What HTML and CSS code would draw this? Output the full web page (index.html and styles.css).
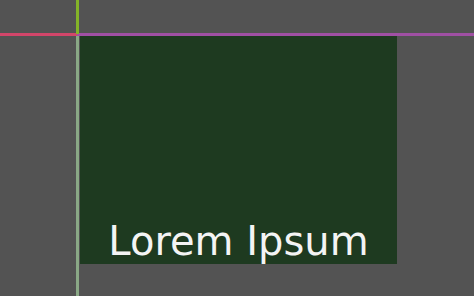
FILE: index.html
```html
<!DOCTYPE html>
<html>
<head>
<meta charset="utf-8">
<link rel="stylesheet" href="styles.css">
</head>
<body>
<div class="canvas">
  <div class="panel">
    <span class="label">Lorem Ipsum</span>
  </div>
  <div class="guide-h-left"></div>
  <div class="guide-h-right"></div>
  <div class="guide-v-top"></div>
  <div class="guide-v-bottom"></div>
</div>
</body>
</html>
```
FILE: styles.css
```css
html, body {
  margin: 0;
  padding: 0;
  background: #535353;
}
.canvas {
  position: relative;
  width: 474px;
  height: 296px;
  overflow: hidden;
  padding: 36px 0 0 80px;
  box-sizing: border-box;
}
.panel {
  width: 317px;
  height: 228px;
  background: #1e3a20;
  display: flex;
  flex-direction: column;
  justify-content: flex-end;
  align-items: center;
  padding-bottom: 3px;
  box-sizing: border-box;
}
.label {
  font-family: "DejaVu Sans", sans-serif;
  font-size: 40px;
  line-height: 1;
  color: #f4f4f4;
}
.guide-h-left {
  position: absolute;
  left: 0;
  top: 33px;
  width: 77px;
  height: 3px;
  background: #d2466a;
}
.guide-h-right {
  position: absolute;
  left: 77px;
  top: 33px;
  right: 0;
  height: 3px;
  background: #a050a4;
}
.guide-v-top {
  position: absolute;
  left: 76px;
  top: 0;
  width: 3px;
  height: 34px;
  background: #84b428;
}
.guide-v-bottom {
  position: absolute;
  left: 76px;
  top: 36px;
  width: 3px;
  bottom: 0;
  background: #8aa886;
}
```
